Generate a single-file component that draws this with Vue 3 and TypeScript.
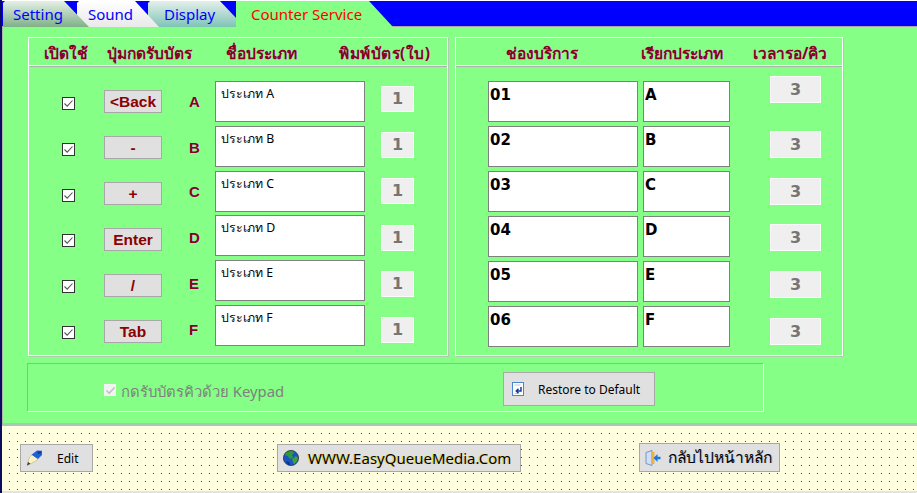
<script setup lang="ts">
const tabs = [
  { label: 'Setting', cls: 'tab-setting' },
  { label: 'Sound', cls: 'tab-sound' },
  { label: 'Display', cls: 'tab-display' },
  { label: 'Counter Service', cls: 'tab-counter' },
]
const keys = ['<Back', '-', '+', 'Enter', '/', 'Tab']
const letters = ['A', 'B', 'C', 'D', 'E', 'F']
const names = ['01', '02', '03', '04', '05', '06']
</script>

<template>
  <div class="app">
    <nav class="tabs">
      <div v-for="t in tabs" :key="t.label" class="tab" :class="t.cls">{{ t.label }}</div>
    </nav>

    <main class="panel">
      <div class="groups">
        <section class="group group-left">
          <header class="ghead">
            <span class="h h-on">เปิดใช้</span>
            <span class="h h-key">ปุ่มกดรับบัตร</span>
            <span class="h h-name">ชื่อประเภท</span>
            <span class="h h-print">พิมพ์บัตร(ใบ)</span>
          </header>
          <div class="gbody">
            <div class="col col-check">
              <span v-for="l in letters" :key="l" class="check">
                <svg width="11" height="11" viewBox="0 0 11 11"><path d="M1.5 5.5 L4.2 8.2 L9.5 2.5" fill="none" stroke="#555" stroke-width="1.1" /></svg>
              </span>
            </div>
            <div class="col col-key">
              <span v-for="k in keys" :key="k" class="keybtn">{{ k }}</span>
            </div>
            <div class="col col-letter">
              <span v-for="l in letters" :key="l" class="letter">{{ l }}</span>
            </div>
            <div class="col col-input">
              <div v-for="l in letters" :key="l" class="field field-thai">ประเภท {{ l }}</div>
            </div>
            <div class="col col-count">
              <span v-for="l in letters" :key="l" class="count">1</span>
            </div>
          </div>
        </section>

        <section class="group group-right">
          <header class="ghead">
            <span class="h h-chan">ช่องบริการ</span>
            <span class="h h-call">เรียกประเภท</span>
            <span class="h h-wait">เวลารอ/คิว</span>
          </header>
          <div class="gbody">
            <div class="col col-name">
              <div v-for="n in names" :key="n" class="field field-bold">{{ n }}</div>
            </div>
            <div class="col col-type">
              <div v-for="l in letters" :key="l" class="field field-bold">{{ l }}</div>
            </div>
            <div class="col col-wait">
              <span v-for="l in letters" :key="l" class="count count-wide">3</span>
            </div>
          </div>
        </section>
      </div>

      <div class="keypad">
        <label class="kp-check">
          <span class="check-off">
            <svg width="11" height="11" viewBox="0 0 11 11"><path d="M1.5 5.5 L4.2 8.2 L9.5 2.5" fill="none" stroke="#bdbdbd" stroke-width="1.4" /></svg>
          </span>
          กดรับบัตรคิวด้วย Keypad
        </label>
        <button class="btn btn-restore" type="button">
          <svg class="ico" width="12" height="14" viewBox="0 0 12 14">
            <rect x="0.5" y="0.5" width="11" height="13" fill="#fff" stroke="#4a86cc" />
            <path d="M2.500 3h6M2.500 11.500h4" stroke="#b8cbe6" />
            <path d="M9 5v4H5M6.500 6.800 4.300 9l2.200 2.200" fill="none" stroke="#123f9c" stroke-width="1.500" />
          </svg>
          Restore to Default
        </button>
      </div>
    </main>

    <footer class="footer">
      <button class="btn btn-edit" type="button">
        <svg class="ico" width="17" height="16" viewBox="0 0 17 16">
          <path d="M1 15.500 L3.500 7 L6.500 4.500 L12 9.500 L9 11.500 Z" fill="#fbf3c4" stroke="#b9b07a" stroke-width="0.600" />
          <path d="M1 15.500 L2 12 L4.500 13.700 Z" fill="#3a3a3a" />
          <path d="M5.500 4.800 L11 .5 L16 .8 L16 5 L12 9 Z" fill="#1f5fd8" />
          <path d="M11.500 1.500 L15 1.500 L15 3.500 L12 4 Z" fill="#0f3a96" />
        </svg>
        <span>Edit</span>
      </button>
      <button class="btn btn-web" type="button">
        <svg class="ico" width="16" height="16" viewBox="0 0 16 16">
          <circle cx="8" cy="8" r="7.600" fill="#1d54c4" />
          <path d="M2 3.500C4 1 8 .5 10 1l1 2-2 2 1 2-2 2-2-1-1-2-2-.5-1.500-.5z" fill="#2f9a3a" />
          <path d="M9 9l4-3 2 2c0 3-2 5-4 6.500l-1-2.500z" fill="#3aa23f" />
          <path d="M3 11l3 1 1 3c-2 0-3-2-4-4z" fill="#0b2f8a" />
          <circle cx="8" cy="8" r="7.600" fill="none" stroke="#222" stroke-width=".7" />
        </svg>
        <span class="web-label">WWW.EasyQueueMedia.Com</span>
      </button>
      <button class="btn btn-back" type="button">
        <svg class="ico" width="16" height="16" viewBox="0 0 16 16">
          <path d="M1 2.500 L7 0.500 V15.500 L1 13.500 Z" fill="#cfdff5" stroke="#5f82ba" stroke-width=".8" />
          <path d="M7 2h2.500v12H7z" fill="#e8b34a" />
          <path d="M15.500 6.800H12.500V4L8.500 8l4 4V9.200h3z" fill="#1678e0" />
        </svg>
        <span class="back-label">กลับไปหน้าหลัก</span>
      </button>
    </footer>
  </div>
</template>

<style scoped>
.app {
  box-sizing: border-box;
  width: 917px;
  height: 493px;
  display: flex;
  flex-direction: column;
  overflow: hidden;
  background: #fff;
  border-left: 2px solid #0a0a5e;
  font-family: "DejaVu Sans", "Noto Sans", sans-serif;
}

.tabs {
  flex: none;
  height: 25px;
  margin-top: 1px;
  display: flex;
  background: #0000ff;
  border-bottom: 1px solid #a8a8a8;
  padding-left: 1px;
}
.tab {
  height: 26px;
  box-sizing: border-box;
  font-family: "Noto Sans", "DejaVu Sans", sans-serif;
  font-size: 15px;
  line-height: 27px;
  color: #0000ff;
  white-space: nowrap;
  position: relative;
}
.tab-setting {
  width: 86px;
  padding-left: 10px;
  background: linear-gradient(#e4f0e6, #7fb088);
  clip-path: polygon(0 2px, 2px 0, 61px 0, 86px 26px, 0 26px);
  z-index: 3;
}
.tab-sound {
  width: 82px;
  margin-left: -12px;
  padding-left: 11px;
  background: linear-gradient(#fff, #e9e9e9);
  clip-path: polygon(0 2px, 2px 0, 58px 0, 82px 26px, 0 26px);
  z-index: 2;
}
.tab-display {
  width: 89px;
  margin-left: -11px;
  padding-left: 16px;
  background: linear-gradient(#e4efea, #7fc4b6);
  clip-path: polygon(0 2px, 2px 0, 72px 0, 89px 18px, 89px 26px, 0 26px);
  z-index: 1;
}
.tab-counter {
  width: 157px;
  margin-left: -1px;
  padding-left: 15px;
  color: #ff0000;
  background: #85ff85;
  clip-path: polygon(0 0, 133px 0, 157px 26px, 0 26px);
  z-index: 4;
}

.panel {
  flex: none;
  box-sizing: border-box;
  height: 399px;
  padding: 10px 0 0 24px;
  background: #85ff85;
  border-left: 1px solid #a8b8a8;
  border-bottom: 3px solid #a6c8b6;
}
.groups {
  display: flex;
  gap: 7px;
}
.group {
  box-sizing: border-box;
  height: 319px;
  border: 1px solid #fff;
  box-shadow: 1px 1px 0 #b4c8b4;
}
.group-left { width: 420px; margin-left: 1px; }
.group-right { width: 388px; }

.ghead {
  box-sizing: border-box;
  height: 28px;
  padding-top: 3px;
  display: flex;
  align-items: center;
  border-bottom: 1px solid #fff;
  box-shadow: 0 1px 0 #b0b0b0;
}
.h {
  font-family: "Noto Sans", "DejaVu Sans", sans-serif;
  font-weight: 700;
  font-size: 15.500px;
  color: #8b0020;
  white-space: nowrap;
  text-shadow: 1px 0 0 rgba(190, 215, 255, 0.7);
}
.h-on { margin-left: 15px; width: 63px; }
.h-key { width: 119px; }
.h-name { width: 113px; }
.h-print { letter-spacing: 0.500px; }
.h-chan { margin-left: 50px; width: 135px; }
.h-call { width: 112px; }

.gbody { display: flex; height: 290px; }
.col { display: flex; flex-direction: column; }

.col-check { width: 75px; padding: 31px 0 0 33px; box-sizing: border-box; gap: 32.800px; }
.check {
  box-sizing: border-box;
  width: 13px;
  height: 13px;
  border: 1px solid #333;
  background: #fff;
  display: flex;
  align-items: center;
  justify-content: center;
}
.col-key { width: 85px; padding-top: 24px; box-sizing: border-box; gap: 23px; }
.keybtn {
  box-sizing: border-box;
  width: 58px;
  height: 23px;
  background: #e0e0e0;
  border: 1px solid #a8a8a8;
  color: #8b0000;
  font-family: "Liberation Sans", sans-serif;
  font-weight: 700;
  font-size: 15.500px;
  line-height: 21px;
  text-align: center;
}
.col-letter { width: 26px; padding-top: 27px; box-sizing: border-box; gap: 29px; }
.letter {
  height: 17px;
  color: #8b0020;
  font-family: "Liberation Sans", sans-serif;
  font-weight: 700;
  font-size: 15px;
  line-height: 17px;
  text-shadow: 1px 0 0 rgba(190, 230, 255, 0.8);
}
.letter:nth-child(3) { margin-top: -2px; }
.col-input { width: 166px; padding-top: 15px; box-sizing: border-box; gap: 3.800px; }
.field {
  box-sizing: border-box;
  width: 150px;
  height: 41px;
  background: #fff;
  border: 1px solid #808080;
  padding-left: 1px;
  color: #000;
}
.field-thai {
  padding: 4px 0 0 5px;
  font-family: "Noto Sans", "DejaVu Sans", sans-serif;
  font-size: 12.300px;
  line-height: 15px;
}
.field-bold {
  font-family: "DejaVu Sans", sans-serif;
  font-weight: 700;
  font-size: 15px;
  line-height: 26px;
}
.col-count { padding-top: 20px; gap: 20.200px; }
.count {
  box-sizing: border-box;
  width: 33px;
  height: 26px;
  background: #efefef;
  border: 1px solid #fafafa;
  color: #757575;
  font-family: "DejaVu Sans", sans-serif;
  font-weight: 700;
  font-size: 16px;
  line-height: 24px;
  text-align: center;
}
.col-name { width: 155px; margin-left: 32px; padding-top: 15px; box-sizing: border-box; gap: 4px; }
.col-type { width: 127px; padding-top: 15px; box-sizing: border-box; gap: 4px; }
.col-type .field { width: 87px; }
.col-wait { padding-top: 10px; gap: 19.800px; }
.count-wide { width: 51px; height: 27px; line-height: 25px; }
.count-wide:first-child { margin-bottom: 8px; }

.keypad {
  box-sizing: border-box;
  width: 737px;
  height: 49px;
  margin-top: 7px;
  display: flex;
  align-items: flex-start;
  border: 1px solid #fff;
  border-top-color: #a8a8a8;
  border-left-color: #a8a8a8;
}
.kp-check {
  display: flex;
  align-items: center;
  gap: 5px;
  margin: 16px 0 0 76px;
  width: 399px;
  color: #808080;
  font-family: "Noto Sans", "DejaVu Sans", sans-serif;
  font-size: 14.800px;
}
.check-off {
  width: 12px;
  height: 12px;
  margin-top: -4px;
  background: #f2f2f2;
  display: flex;
  align-items: center;
  justify-content: center;
}
.btn {
  box-sizing: border-box;
  display: flex;
  align-items: center;
  background: #e0e0e0;
  border: 1px solid #a8a8a8;
  padding: 0;
  color: #000;
  font-family: "Noto Sans", "DejaVu Sans", sans-serif;
}
.btn-restore {
  width: 152px;
  height: 34px;
  font-size: 12px;
  padding-left: 8px;
  gap: 14px;
  margin-top: 8px;
}

.footer {
  flex: 1;
  display: flex;
  align-items: flex-end;
  padding-bottom: 19px;
  box-sizing: border-box;
  background-color: #ffffe0;
  background-image: conic-gradient(at 1px 1px, transparent 75%, #c01818 0);
  background-size: 8px 8px;
  background-position: 7px 7px;
  border-bottom: 2px solid #e4e4e4;
}
.btn-edit {
  width: 73px;
  height: 28px;
  margin-left: 18px;
  padding-left: 5px;
  font-size: 12px;
  gap: 14px;
}
.btn-web {
  width: 244px;
  height: 28px;
  margin-left: 184px;
  padding-left: 5px;
  font-size: 15px;
  gap: 9px;
}
.web-label { text-shadow: -1px 0 0 rgba(245, 220, 0, 0.8); }
.btn-back {
  width: 141px;
  height: 29px;
  margin-left: 118px;
  padding-left: 5px;
  font-size: 15.500px;
  gap: 7px;
}
.back-label { text-shadow: 1px 0 0 rgba(70, 110, 170, 0.3); }
.ico { flex: none; }
</style>
